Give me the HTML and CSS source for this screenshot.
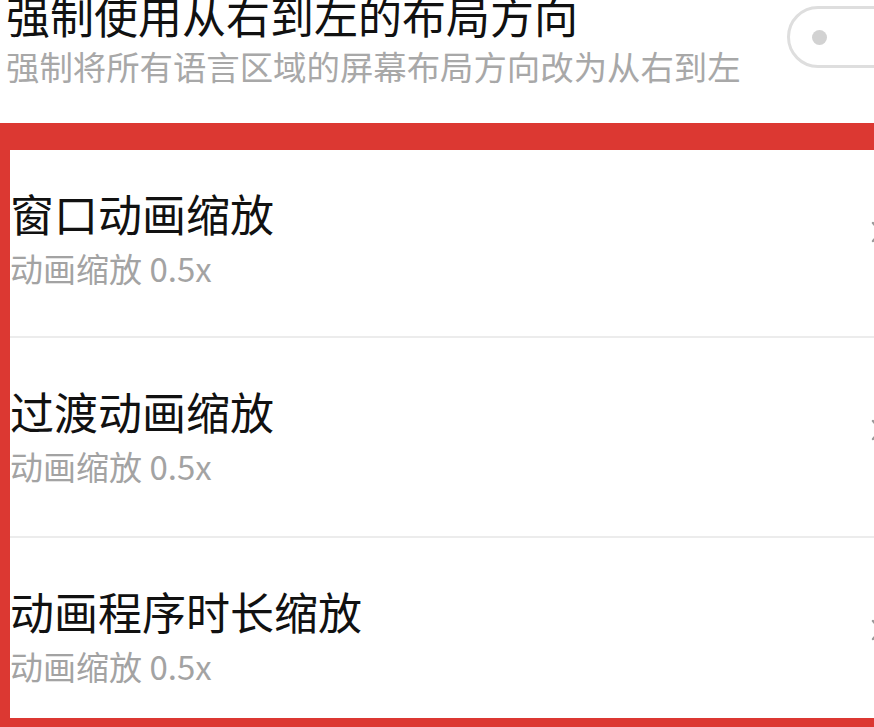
FILE: index.html
```html
<!DOCTYPE html>
<html lang="zh-CN">
<head>
<meta charset="utf-8">
<title>开发者选项</title>
<link rel="stylesheet" href="styles.css">
</head>
<body>
<div class="top">
  <div class="top-text">
    <div class="title">强制使用从右到左的布局方向</div>
    <div class="sub top-sub">强制将所有语言区域的屏幕布局方向改为从右到左</div>
  </div>
  <div class="switch"><span class="knob"></span></div>
</div>
<div class="frame">
  <div class="row">
    <div class="row-text">
      <div class="title">窗口动画缩放</div>
      <div class="sub">动画缩放 0.5x</div>
    </div>
    <svg class="chev" viewBox="0 0 12 22" width="12" height="22"><path d="M2 2 L10 11 L2 20" fill="none" stroke="#9a9a9a" stroke-width="2.4" stroke-linecap="round" stroke-linejoin="round"/></svg>
  </div>
  <div class="row">
    <div class="row-text">
      <div class="title">过渡动画缩放</div>
      <div class="sub">动画缩放 0.5x</div>
    </div>
    <svg class="chev" viewBox="0 0 12 22" width="12" height="22"><path d="M2 2 L10 11 L2 20" fill="none" stroke="#9a9a9a" stroke-width="2.4" stroke-linecap="round" stroke-linejoin="round"/></svg>
  </div>
  <div class="row">
    <div class="row-text">
      <div class="title">动画程序时长缩放</div>
      <div class="sub">动画缩放 0.5x</div>
    </div>
    <svg class="chev" viewBox="0 0 12 22" width="12" height="22"><path d="M2 2 L10 11 L2 20" fill="none" stroke="#9a9a9a" stroke-width="2.4" stroke-linecap="round" stroke-linejoin="round"/></svg>
  </div>
</div>
</body>
</html>
```
FILE: styles.css
```css
* { box-sizing: border-box; }
html, body {
  margin: 0;
  padding: 0;
  background: #ffffff;
  overflow: hidden;
  width: 874px;
  height: 727px;
}
body {
  font-family: "Noto Sans CJK SC", "Noto Sans", Roboto, sans-serif;
}
.title {
  font-size: 44px;
  line-height: 56px;
  color: #111111;
  white-space: nowrap;
}
.sub {
  font-size: 33px;
  line-height: 54px;
  color: #a3a3a3;
  white-space: nowrap;
}
.top {
  height: 123px;
  display: flex;
  align-items: flex-start;
  justify-content: space-between;
  padding-left: 6px;
  overflow: hidden;
}
.top-text {
  margin-top: -13px;
}
.top-sub {
  font-size: 33.4px;
  line-height: 46px;
  color: #a8a8a8;
}
.switch {
  margin-top: 6px;
  width: 120px;
  height: 62px;
  margin-right: -33px;
  border: 3px solid #dedede;
  border-radius: 31px;
  display: flex;
  align-items: center;
  padding-left: 22px;
  flex-shrink: 0;
}
.knob {
  width: 15px;
  height: 15px;
  border-radius: 50%;
  background: #d2d2d2;
}
.frame {
  height: 604px;
  border-top: 27px solid #dc3832;
  border-left: 10px solid #dc3832;
  border-bottom: 9px solid #dc3832;
  overflow: hidden;
  background: #ffffff;
}
.row {
  height: 200px;
  padding-top: 45px;
  border-bottom: 2px solid #ececec;
  display: flex;
  align-items: flex-start;
  justify-content: space-between;
}
.row:first-child {
  height: 188px;
  padding-top: 35px;
}
.row-text {
  flex: 1;
  min-width: 0;
}
.chev {
  flex-shrink: 0;
  margin-top: 36px;
  margin-right: -9px;
}
```
